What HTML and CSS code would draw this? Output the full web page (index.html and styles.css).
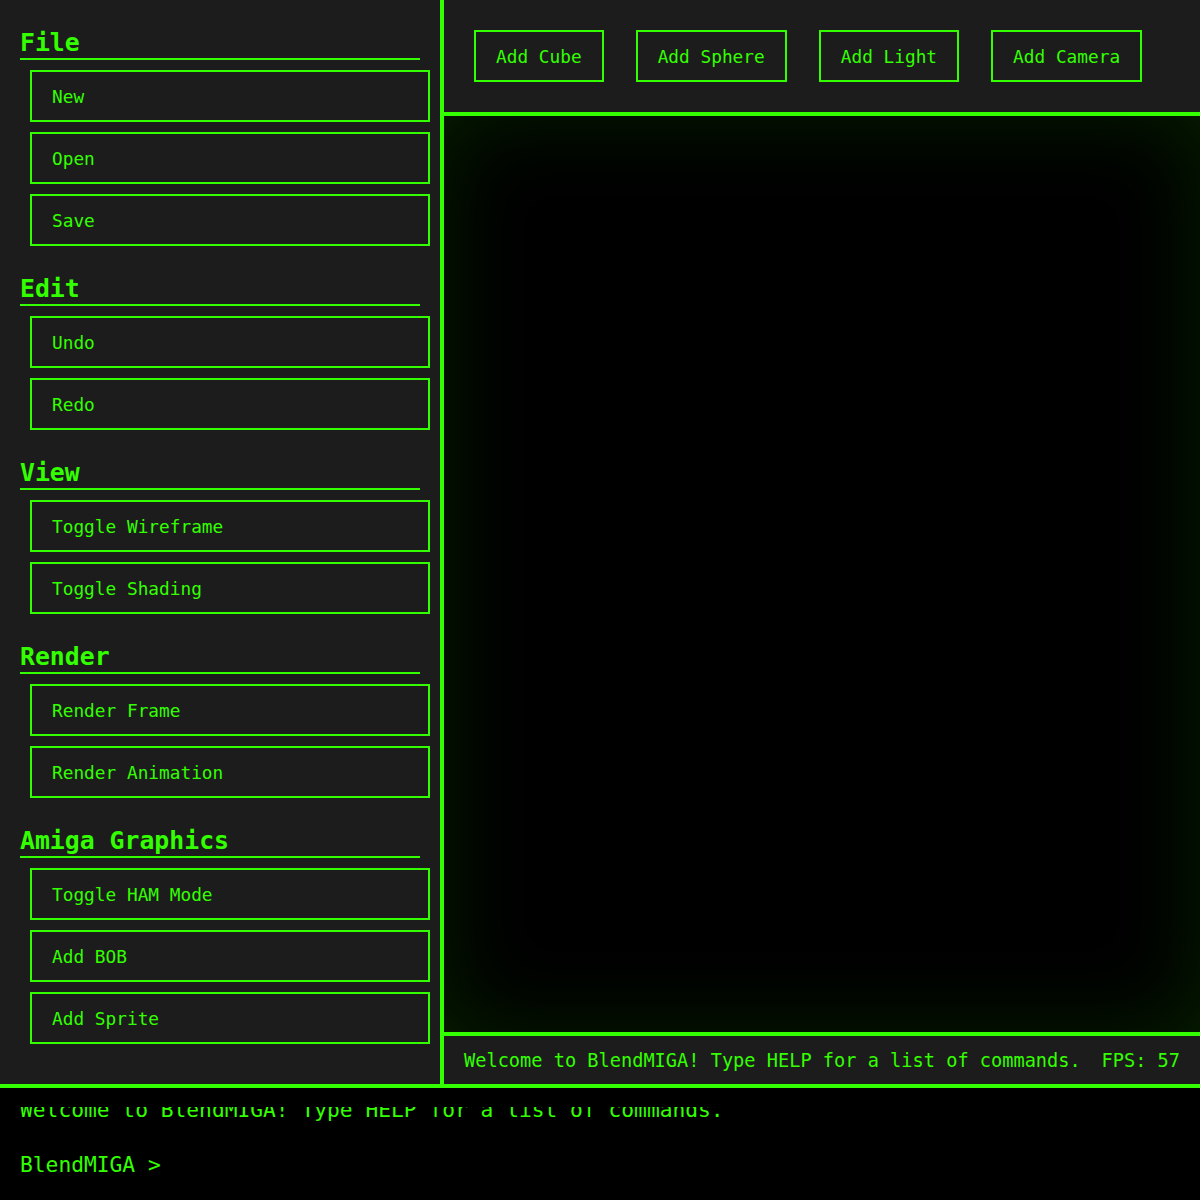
FILE: index.html
```html
<!DOCTYPE html>
<html lang="en">
<head>
<meta charset="utf-8">
<title>BlendMIGA</title>
<link rel="stylesheet" href="styles.css">
</head>
<body>
<div class="app">
  <div class="workspace">
    <aside class="sidebar">
      <section class="menu-section">
        <h2 class="menu-title">File</h2>
        <button class="menu-btn">New</button>
        <button class="menu-btn">Open</button>
        <button class="menu-btn">Save</button>
      </section>
      <section class="menu-section">
        <h2 class="menu-title">Edit</h2>
        <button class="menu-btn">Undo</button>
        <button class="menu-btn">Redo</button>
      </section>
      <section class="menu-section">
        <h2 class="menu-title">View</h2>
        <button class="menu-btn">Toggle Wireframe</button>
        <button class="menu-btn">Toggle Shading</button>
      </section>
      <section class="menu-section">
        <h2 class="menu-title">Render</h2>
        <button class="menu-btn">Render Frame</button>
        <button class="menu-btn">Render Animation</button>
      </section>
      <section class="menu-section">
        <h2 class="menu-title">Amiga Graphics</h2>
        <button class="menu-btn">Toggle HAM Mode</button>
        <button class="menu-btn">Add BOB</button>
        <button class="menu-btn">Add Sprite</button>
      </section>
    </aside>
    <main class="main">
      <div class="toolbar">
        <button class="tool-btn">Add Cube</button>
        <button class="tool-btn">Add Sphere</button>
        <button class="tool-btn">Add Light</button>
        <button class="tool-btn">Add Camera</button>
      </div>
      <div class="viewport"></div>
      <div class="status-bar">
        <span class="status-msg">Welcome to BlendMIGA! Type HELP for a list of commands.</span>
        <span class="status-fps">FPS: 57</span>
      </div>
    </main>
  </div>
  <div class="console">
    <div class="console-output">
      <div class="console-line">Welcome to BlendMIGA! Type HELP for a list of commands.</div>
    </div>
    <div class="console-input">
      <span class="prompt">BlendMIGA &gt;</span>
      <input class="console-field" type="text" aria-label="command">
    </div>
  </div>
</div>
</body>
</html>
```
FILE: styles.css
```css
* {
  box-sizing: border-box;
}

html, body {
  margin: 0;
  padding: 0;
  background: #000;
}

body {
  font-family: "DejaVu Sans Mono", "Liberation Mono", monospace;
  color: #33ff00;
}

.app {
  width: 1200px;
  height: 1200px;
  display: flex;
  flex-direction: column;
  overflow: hidden;
}

.workspace {
  height: 1084px;
  display: flex;
}

.sidebar {
  width: 444px;
  flex: 0 0 444px;
  background: #1c1c1c;
  border-right: 4px solid #33ff00;
  padding: 28px 20px 20px 20px;
  display: flex;
  flex-direction: column;
  gap: 28px;
}

.menu-section {
  display: flex;
  flex-direction: column;
  gap: 10px;
}

.menu-title {
  margin: 0;
  font-size: 24.8px;
  line-height: 30px;
  font-weight: bold;
  border-bottom: 2px solid #33ff00;
}

.menu-btn,
.tool-btn {
  font-family: "DejaVu Sans Mono", "Liberation Mono", monospace;
  font-size: 17.8px;
  color: #33ff00;
  background: transparent;
  border: 2px solid #33ff00;
  height: 52px;
  padding: 0 20px;
  text-align: left;
  white-space: nowrap;
  cursor: pointer;
}

.menu-btn {
  width: 100%;
  margin-left: 10px;
}

.main {
  flex: 1;
  display: flex;
  flex-direction: column;
  background: #1c1c1c;
}

.toolbar {
  height: 116px;
  padding: 30px;
  border-bottom: 4px solid #33ff00;
  display: flex;
  align-items: flex-start;
  gap: 32px;
}

.viewport {
  flex: 1;
  background: #000;
  box-shadow: inset 0 0 90px rgba(51, 255, 0, 0.12);
}

.status-bar {
  height: 52px;
  border-top: 4px solid #33ff00;
  padding: 0 20px;
  display: flex;
  align-items: center;
  justify-content: space-between;
  font-size: 18.64px;
  white-space: nowrap;
}

.console {
  height: 116px;
  border-top: 4px solid #33ff00;
  background: #000;
  padding: 19px 20px 22.6px;
  display: flex;
  flex-direction: column;
  font-size: 21.25px;
  line-height: 25.5px;
}

.console-output {
  flex: 1;
  overflow: hidden;
  display: flex;
  flex-direction: column;
  justify-content: flex-end;
  white-space: nowrap;
}

.console-input {
  margin-top: 29.5px;
  display: flex;
  align-items: baseline;
  gap: 12px;
}

.prompt {
  white-space: pre;
}

.console-field {
  flex: 1;
  background: transparent;
  border: none;
  outline: none;
  color: #33ff00;
  font: inherit;
  padding: 0;
}
```
